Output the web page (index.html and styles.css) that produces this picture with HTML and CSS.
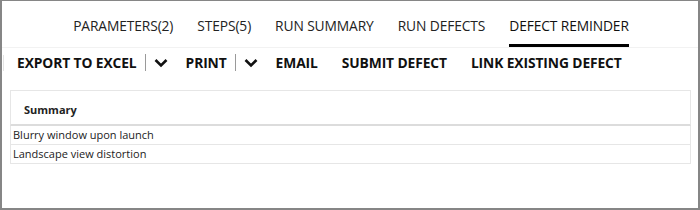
FILE: index.html
```html
<!DOCTYPE html>
<html>
<head>
<meta charset="utf-8">
<link rel="stylesheet" href="styles.css">
</head>
<body>
<div class="frame">
  <nav class="tabs">
    <span class="tab">PARAMETERS(2)</span>
    <span class="tab">STEPS(5)</span>
    <span class="tab">RUN SUMMARY</span>
    <span class="tab">RUN DEFECTS</span>
    <span class="tab active">DEFECT REMINDER</span>
  </nav>
  <div class="toolbar">
    <span class="lead-sep"></span>
    <span class="action split">EXPORT TO EXCEL</span>
    <span class="sep"></span>
    <span class="chev"><svg width="14" height="10" viewBox="0 0 14 10"><path d="M1.5 2 L7 7.5 L12.5 2" fill="none" stroke="#111" stroke-width="2.6"/></svg></span>
    <span class="action split">PRINT</span>
    <span class="sep"></span>
    <span class="chev"><svg width="14" height="10" viewBox="0 0 14 10"><path d="M1.5 2 L7 7.5 L12.5 2" fill="none" stroke="#111" stroke-width="2.6"/></svg></span>
    <span class="action">EMAIL</span>
    <span class="action">SUBMIT DEFECT</span>
    <span class="action">LINK EXISTING DEFECT</span>
  </div>
  <div class="grid">
    <div class="head">Summary</div>
    <div class="row">Blurry window upon launch</div>
    <div class="row">Landscape view distortion</div>
  </div>
</div>
</body>
</html>
```
FILE: styles.css
```css
* { box-sizing: border-box; }
html, body { margin: 0; padding: 0; background: #fff; }
.frame {
  width: 700px;
  height: 210px;
  border: 2px solid #868686;
  border-top-width: 1px;
  font-family: "Open Sans", "Noto Sans", sans-serif;
  color: #111;
  overflow: hidden;
}
.tabs {
  display: flex;
  justify-content: center;
  gap: 24px;
  padding-top: 15px;
  height: 46px;
  padding-left: 2px;
}
.tab {
  font-size: 13.8px;
  letter-spacing: -0.12px;
  line-height: 20px;
  color: #222;
  height: 31px;
  border-bottom: 3px solid transparent;
}
.tab.active { border-bottom-color: #000; color: #111; }
.toolbar {
  display: flex;
  align-items: center;
  border-top: 1px solid #f2f2f2;
  height: 30px;
}
.lead-sep {
  width: 1px;
  height: 16px;
  background: #e4e4e4;
  margin-left: 1px;
  margin-right: 13px;
}
.action {
  font-weight: 700;
  font-size: 13.8px;
  letter-spacing: -0.1px;
  color: #111;
  margin-right: 24px;
}
.action.split { margin-right: 8px; }
.sep {
  width: 1px;
  height: 17px;
  background: #9a9a9a;
  margin-right: 8px;
}
.chev { display: flex; margin-right: 18px; }
.grid {
  margin: 13px 7px 0 8px;
  font-size: 11px;
  color: #222;
}
.head {
  height: 36px;
  border: 1px solid #e6e6e6;
  border-bottom: 2px solid #dcdcdc;
  font-weight: 700;
  padding-left: 13px;
  display: flex;
  align-items: center;
  padding-top: 4px;
}
.row {
  height: 19px;
  border: 1px solid #e6e6e6;
  border-top: none;
  padding-left: 2px;
  line-height: 18px;
}
```
